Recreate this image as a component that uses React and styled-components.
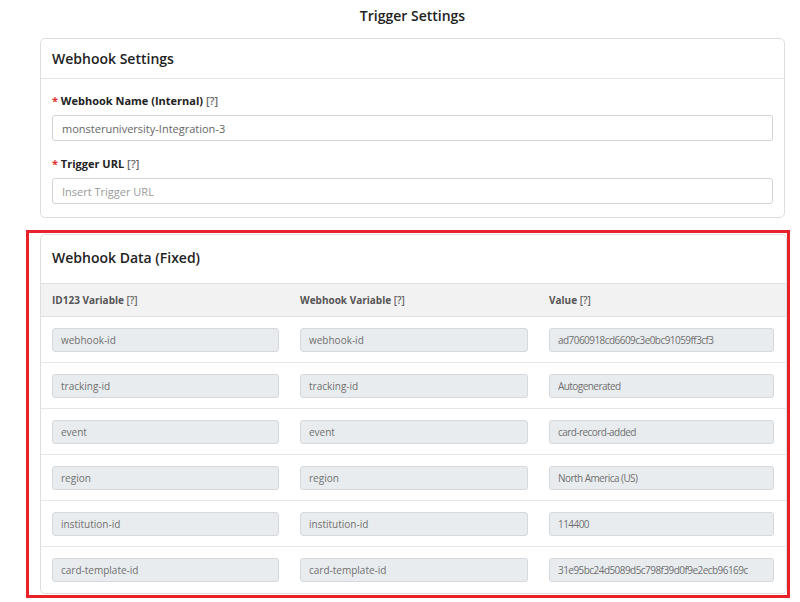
import React from 'react';
import styled, { createGlobalStyle } from 'styled-components';

const GlobalStyle = createGlobalStyle`
  body {
    margin: 0;
    background: #fff;
    font-family: 'Open Sans', 'Noto Sans', sans-serif;
    color: #222;
  }
`;

const rows = [
  ['webhook-id', 'webhook-id', 'ad7060918cd6609c3e0bc91059ff3cf3'],
  ['tracking-id', 'tracking-id', 'Autogenerated'],
  ['event', 'event', 'card-record-added'],
  ['region', 'region', 'North America (US)'],
  ['institution-id', 'institution-id', '114400'],
  ['card-template-id', 'card-template-id', '31e95bc24d5089d5c798f39d0f9e2ecb96169c'],
];

const App = () => {
  return (
    <>
      <GlobalStyle />
      <Page>
        <Title>Trigger Settings</Title>
        <Card>
          <CardHeader>Webhook Settings</CardHeader>
          <CardBody>
            <Label>
              <Required>*</Required> Webhook Name (Internal) <Help>[?]</Help>
            </Label>
            <TextInput defaultValue='monsteruniversity-Integration-3' />
            <Label>
              <Required>*</Required> Trigger URL <Help>[?]</Help>
            </Label>
            <TextInput placeholder='Insert Trigger URL' />
          </CardBody>
        </Card>
        <Highlight>
          <Card>
            <CardHeader tall>Webhook Data (Fixed)</CardHeader>
            <HeadRow>
              <HeadCell>ID123 Variable <Help>[?]</Help></HeadCell>
              <HeadCell>Webhook Variable <Help>[?]</Help></HeadCell>
              <HeadCell>Value <Help>[?]</Help></HeadCell>
            </HeadRow>
            {rows.map((row, i) => (
              <DataRow key={i} last={i === rows.length - 1}>
                {row.map((value, j) => (
                  <ReadOnly key={j} value={value} tight={j === 2} readOnly />
                ))}
              </DataRow>
            ))}
          </Card>
        </Highlight>
      </Page>
    </>
  );
};

export default App;

const Page = styled.div`
  margin: 0 15px 0 40px;
  padding-top: 6px;
`;

const Title = styled.h1`
  margin: 0 0 12px;
  font-size: 14px;
  line-height: 20px;
  font-weight: 600;
  text-align: center;
  color: #222;
`;

const Card = styled.div`
  border: 1px solid #dedede;
  border-radius: 5px;
  background: #fff;
  overflow: hidden;
`;

const CardHeader = styled.div`
  display: flex;
  align-items: ${p => (p.tall ? 'flex-start' : 'center')};
  padding: ${p => (p.tall ? '13px 11px 0' : '0 11px')};
  box-sizing: border-box;
  font-size: 14px;
  font-weight: 600;
  color: #222;
  border-bottom: ${p => (p.tall ? 'none' : '1px solid #e3e3e3')};
  height: ${p => (p.tall ? '48px' : '40px')};
`;

const CardBody = styled.div`
  padding: 13px 11px 13px;
`;

const Label = styled.div`
  font-size: 11px;
  line-height: 17px;
  font-weight: 700;
  color: #222;
  margin-bottom: 6px;

  &:not(:first-child) {
    margin-top: 14px;
  }
`;

const Required = styled.span`
  color: #e0302a;
`;

const Help = styled.span`
  font-weight: 600;
  color: #666;
`;

const TextInput = styled.input`
  display: block;
  width: 100%;
  height: 26px;
  box-sizing: border-box;
  border: 1px solid #d4d4d4;
  border-radius: 3px;
  padding: 0 9px;
  font-family: inherit;
  font-size: 11px;
  color: #666;
  background: #fff;
  outline: none;

  &::placeholder {
    color: #9a9a9a;
  }
`;

const Highlight = styled.div`
  margin: 12px -5px 4px -14px;
  border: 3px solid #e8202a;
  padding: 1px 0 1px 11px;
`;

const grid = `
  display: grid;
  grid-template-columns: 227px 228px 1fr;
  column-gap: 21px;
  padding: 0 12px 0 11px;
  box-sizing: border-box;
`;

const HeadRow = styled.div`
  ${grid}
  height: 34px;
  align-items: center;
  background: #f2f2f2;
  border-top: 1px solid #e0e0e0;
  border-bottom: 1px solid #e0e0e0;
`;

const HeadCell = styled.div`
  font-size: 10px;
  font-weight: 700;
  color: #555;
`;

const DataRow = styled.div`
  ${grid}
  height: 46px;
  align-items: center;
  border-bottom: ${p => (p.last ? 'none' : '1px solid #e6e6e6')};
`;

const ReadOnly = styled.input`
  width: 100%;
  height: 24px;
  box-sizing: border-box;
  border: 1px solid #d6d9dc;
  border-radius: 3px;
  padding: 0 ${p => (p.tight ? '6px' : '8px')} 0 8px;
  background: #e9ecef;
  font-family: inherit;
  font-size: 10px;
  letter-spacing: ${p => (p.tight ? '-0.55px' : '0')};
  color: #707070;
  outline: none;
`;
